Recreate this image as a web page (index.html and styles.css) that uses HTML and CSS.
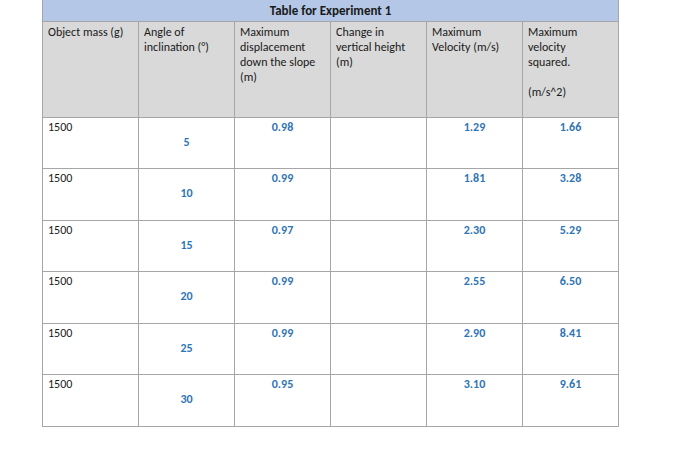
FILE: index.html
```html
<!DOCTYPE html>
<html>
<head>
<meta charset="utf-8">
<link rel="stylesheet" href="styles.css">
</head>
<body>
<table class="exp">
  <colgroup>
    <col class="c"><col class="c"><col class="c"><col class="c"><col class="c"><col class="c">
  </colgroup>
  <tr class="title-row"><th colspan="6">Table for Experiment 1</th></tr>
  <tr class="head-row">
    <td>Object mass (g)</td>
    <td>Angle of<br>inclination (°)</td>
    <td>Maximum<br>displacement<br>down the slope<br>(m)</td>
    <td>Change in<br>vertical height<br>(m)</td>
    <td>Maximum<br>Velocity (m/s)</td>
    <td>Maximum<br>velocity<br>squared.<br><br>(m/s^2)</td>
  </tr>
  <tr class="data-row"><td class="mass">1500</td><td class="num angle">5</td><td class="num">0.98</td><td></td><td class="num">1.29</td><td class="num">1.66</td></tr>
  <tr class="data-row"><td class="mass">1500</td><td class="num angle">10</td><td class="num">0.99</td><td></td><td class="num">1.81</td><td class="num">3.28</td></tr>
  <tr class="data-row"><td class="mass">1500</td><td class="num angle">15</td><td class="num">0.97</td><td></td><td class="num">2.30</td><td class="num">5.29</td></tr>
  <tr class="data-row"><td class="mass">1500</td><td class="num angle">20</td><td class="num">0.99</td><td></td><td class="num">2.55</td><td class="num">6.50</td></tr>
  <tr class="data-row"><td class="mass">1500</td><td class="num angle">25</td><td class="num">0.99</td><td></td><td class="num">2.90</td><td class="num">8.41</td></tr>
  <tr class="data-row"><td class="mass">1500</td><td class="num angle">30</td><td class="num">0.95</td><td></td><td class="num">3.10</td><td class="num">9.61</td></tr>
</table>
</body>
</html>
```
FILE: styles.css
```css
html, body {
  margin: 0;
  padding: 0;
  background: #ffffff;
}
body {
  font-family: Carlito, Lato, "Open Sans", sans-serif;
  font-size: 12px;
  color: #1a1a1a;
}
.exp {
  border-collapse: collapse;
  table-layout: fixed;
  width: 576px;
  margin-left: 42px;
}
.exp .c {
  width: 96px;
}
.exp td {
  border: 1px solid #a6a6a6;
  vertical-align: top;
  line-height: 15px;
  padding: 3px 5px 0 5px;
}
.title-row {
  height: 21px;
}
.title-row th {
  padding: 0;
  background: #b4c7e7;
  border: 1px solid #a6a6a6;
  border-top: none;
  font-size: 13px;
  font-weight: bold;
  text-align: center;
  vertical-align: middle;
  color: #1a1a1a;
}
.head-row {
  height: 96px;
}
.head-row td {
  background: #d9d9d9;
}
.data-row {
  height: 51.5px;
}
.data-row td {
  padding-top: 2px;
}
.num {
  text-align: center;
  font-weight: bold;
  color: #2e74b5;
}
.data-row .angle {
  padding-top: 17px;
}
```
